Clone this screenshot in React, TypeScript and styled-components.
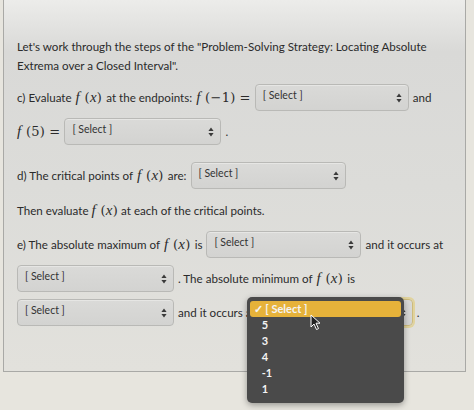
import React from 'react';
import styled, { createGlobalStyle } from 'styled-components';

const GlobalStyle = createGlobalStyle`
	html, body {
		margin: 0;
		padding: 0;
		background: #e7e5de;
		font-family: Lato, 'Open Sans', sans-serif;
	}
`;

const Page = styled.div`
	width: 474px;
	height: 410px;
	overflow: hidden;
	background: #e7e5de;
`;

const Panel = styled.div`
	margin-left: 3px;
	width: 463px;
	height: 372px;
	box-sizing: border-box;
	border: 1px solid #a9a9a6;
	border-top: none;
	background: linear-gradient(180deg, #ececea 0%, #d9d9d7 14%, #dcdcd9 50%, #e2e1dc 100%);
	padding: 37px 0 0 13px;
	color: #2b2b2b;
	font-size: 11.6px;
`;

const Intro = styled.p`
	margin: 0 0 9px;
	line-height: 19px;
	width: 440px;
`;

const Row = styled.div<{ $mt?: number }>`
	display: flex;
	align-items: center;
	gap: 4px;
	height: 27px;
	margin-top: ${(p) => p.$mt ?? 0}px;
	white-space: nowrap;
`;

const Plain = styled.div<{ $mt?: number }>`
	margin-top: ${(p) => p.$mt ?? 0}px;
	line-height: 20px;
`;

const MathVar = styled.span`
	font-family: 'DejaVu Serif', 'Liberation Serif', serif;
	font-size: 13px;
	letter-spacing: 0.3px;
	i {
		font-style: italic;
		font-family: 'Liberation Serif', serif;
		font-size: 15px;
	}
`;

const SelectBox = styled.div<{ $w: number; $focus?: boolean }>`
	position: relative;
	display: flex;
	align-items: center;
	justify-content: space-between;
	box-sizing: border-box;
	width: ${(p) => p.$w}px;
	height: 27px;
	padding: 0 6px 0 7px;
	border: 1px solid ${(p) => (p.$focus ? '#cdbb7c' : '#b9b9b6')};
	border-radius: 4px;
	background: linear-gradient(180deg, #dadad8 0%, #d3d3d1 100%);
	box-shadow: ${(p) => (p.$focus ? '0 0 0 2px #e1d39c' : 'inset 0 1px 0 #e6e6e4')};
	font-size: 10.5px;
	color: #333;
	span {
		margin-top: -6px;
	}
`;

const Arrows = () => (
	<svg width="6" height="10" viewBox="0 0 6 10">
		<path d="M3 0.5 L5.6 4 H0.4 Z M3 9.5 L5.6 6 H0.4 Z" fill="#3a3a3a" />
	</svg>
);

const Select: React.FC<{ w: number; focus?: boolean; children?: React.ReactNode }> = ({ w, focus, children }) => (
	<SelectBox $w={w} $focus={focus}>
		<span>[ Select ]</span>
		<Arrows />
		{children}
	</SelectBox>
);

const Menu = styled.div`
	position: absolute;
	left: -14px;
	top: -3px;
	width: 157px;
	height: 106px;
	box-sizing: border-box;
	padding: 4px 3px;
	border-radius: 5px;
	background: #4a4a4a;
	box-shadow: 0 2px 6px rgba(0, 0, 0, 0.35);
	z-index: 2;
`;

const Option = styled.div<{ $active?: boolean }>`
	height: 16px;
	line-height: 16px;
	padding-left: ${(p) => (p.$active ? 4 : 12)}px;
	border-radius: 3px;
	background: ${(p) => (p.$active ? '#e6b23a' : 'transparent')};
	color: #f4f4f4;
	font-family: Lato, 'Liberation Sans', sans-serif;
	font-weight: 700;
	font-size: 11px;
`;

const Cursor = () => (
	<svg
		width="12"
		height="17"
		viewBox="0 0 12 17"
		style={{ position: 'absolute', left: 63, top: 17 }}
	>
		<path d="M1 1 L1 13 L4 10 L6.5 15.5 L8.5 14.6 L6 9.2 L10 9.2 Z" fill="#222" stroke="#fff" strokeWidth="1" />
	</svg>
);

const F: React.FC<{ arg: React.ReactNode }> = ({ arg }) => (
	<MathVar>
		<i>f</i> ({arg})
	</MathVar>
);

const App: React.FC = () => {
	return (
		<Page>
			<GlobalStyle />
			<Panel>
				<Intro>
					Let's work through the steps of the "Problem-Solving Strategy: Locating Absolute Extrema over a Closed
					Interval".
				</Intro>
				<Row>
					c) Evaluate <F arg={<i>x</i>} /> at the endpoints: <F arg="−1" /> <MathVar>=</MathVar>
					<Select w={154} /> and
				</Row>
				<Row $mt={7}>
					<F arg="5" /> <MathVar>=</MathVar> <Select w={157} /> .
				</Row>
				<Row $mt={17}>
					d) The critical points of <F arg={<i>x</i>} /> are: <Select w={155} />
				</Row>
				<Plain $mt={11}>
					Then evaluate <F arg={<i>x</i>} /> at each of the critical points.
				</Plain>
				<Row $mt={10}>
					e) The absolute maximum of <F arg={<i>x</i>} /> is <Select w={155} /> and it occurs at
				</Row>
				<Row $mt={7}>
					<Select w={157} /> . The absolute minimum of <F arg={<i>x</i>} /> is
				</Row>
				<Row $mt={7}>
					<Select w={157} /> and it occurs at
					<Select w={153} focus>
						<Menu>
							<Option $active>✓ [ Select ]</Option>
							<Option>5</Option>
							<Option>3</Option>
							<Option>4</Option>
							<Option>-1</Option>
							<Option>1</Option>
							<Cursor />
						</Menu>
					</Select>
					.
				</Row>
			</Panel>
		</Page>
	);
};

export default App;
